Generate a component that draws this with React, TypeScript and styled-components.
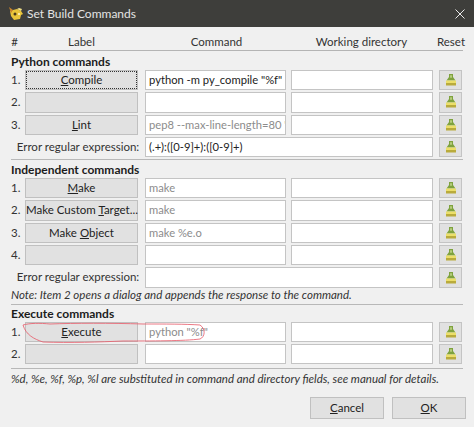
import React from 'react'
import styled, { createGlobalStyle } from 'styled-components'

const Global = createGlobalStyle`
  html, body { margin: 0; padding: 0; background: #f0f0f0; }
  body { font-family: Lato, "Noto Sans", sans-serif; font-size: 11.5px; color: #222; }
`

const Dialog = styled.div`
  position: relative;
  width: 474px;
  height: 427px;
  overflow: hidden;
  background: #f0f0f0;
`

const TitleBar = styled.div`
  height: 27px;
  background: #3e3e3b;
  color: #e4e4e4;
  display: flex;
  align-items: center;
  padding: 0 9px 0 8px;
  font-size: 12px;
`

const Title = styled.span`
  margin-left: 3px;
  flex: 1;
`

const Body = styled.div`
  padding: 7px 11px 0;
`

const HeaderRow = styled.div`
  display: flex;
  height: 16px;
  line-height: 16px;
  border-bottom: 1px solid #b4b4b4;
  color: #333;
`

const HeaderCell = styled.div<{ $w: number }>`
  width: ${p => p.$w}px;
  text-align: center;
  flex: none;
`

const SectionTitle = styled.div<{ $top: number }>`
  font-size: 12px;
  font-weight: bold;
  color: #1c1c1c;
  height: 15px;
  line-height: 14px;
  margin-top: ${p => p.$top}px;
`

const Rows = styled.div`
  display: flex;
  flex-direction: column;
  gap: 2px;
`

const Row = styled.div`
  display: flex;
  height: 20.3px;
  align-items: stretch;
`

const Num = styled.div`
  width: 14px;
  flex: none;
  line-height: 20px;
  color: #333;
`

const LabelButton = styled.div<{ $focus?: boolean }>`
  width: 113px;
  flex: none;
  margin-right: 7px;
  box-sizing: border-box;
  background: #e1e1e1;
  border: 1px solid #c0c0c0;
  text-align: center;
  line-height: 18px;
  color: #222;
  white-space: nowrap;
  outline: ${p => (p.$focus ? '1px dotted #333' : 'none')};
  outline-offset: -2px;
`

const ErrorLabel = styled.div`
  width: 134px;
  flex: none;
  text-align: center;
  line-height: 20px;
  color: #333;
  white-space: nowrap;
`

const Field = styled.div<{ $w: number; $gap: number; $hint?: boolean }>`
  width: ${p => p.$w}px;
  flex: none;
  margin-right: ${p => p.$gap}px;
  box-sizing: border-box;
  background: #fff;
  border: 1px solid #c4c4c4;
  padding: 0 3px;
  font-size: 11.2px;
  line-height: 18px;
  white-space: nowrap;
  overflow: hidden;
  color: ${p => (p.$hint ? '#8c8c8c' : '#222')};
`

const ResetButton = styled.div`
  width: 23px;
  flex: none;
  box-sizing: border-box;
  background: #e1e1e1;
  border: 1px solid #c4c4c4;
  display: flex;
  align-items: center;
  justify-content: center;
`

const Separator = styled.div<{ $top: number }>`
  border-top: 1px solid #b8b8b8;
  margin-top: ${p => p.$top}px;
`

const Note = styled.div<{ $top: number }>`
  font-style: italic;
  line-height: 14px;
  margin-top: ${p => p.$top}px;
  color: #333;
  white-space: nowrap;
`

const Footer = styled.div`
  display: flex;
  justify-content: flex-end;
  gap: 8px;
  margin: 10.5px -3px 0 0;
`

const FooterButton = styled.div`
  width: 74px;
  height: 22px;
  box-sizing: border-box;
  background: #e1e1e1;
  border: 1px solid #c0c0c0;
  text-align: center;
  line-height: 20px;
  color: #222;
`

const Scribble = styled.svg`
  position: absolute;
  left: 0;
  top: 0;
  pointer-events: none;
`

const ClearIcon = () => (
  <svg width="12" height="14" viewBox="0 0 12 14">
    <path d="M4 1h4v3l2.5 3.5h-9L4 4z" fill="#7ea23e" />
    <path d="M5.2 2.2h1.6v2.6H5.2z" fill="#c5d88c" />
    <rect x="1" y="7.5" width="10" height="2.5" fill="#ecdf6a" />
    <rect x="1" y="10" width="10" height="2.5" fill="#b9ab3c" />
  </svg>
)

const AppIcon = () => (
  <svg width="16" height="16" viewBox="0 0 16 16">
    <path d="M2 5l3-1 4-1 4 2 2 3-2 1-1 4-6 1-3-4z" fill="#e9c53a" />
    <path d="M1 1l4 3-2 3z" fill="#c9832a" />
    <path d="M9 3l4 2 1-2-3-1z" fill="#f3e38a" />
    <circle cx="7" cy="8" r="1.5" fill="#4a3a1a" />
    <circle cx="11" cy="8" r="1.1" fill="#fff3c0" />
  </svg>
)

const CloseIcon = () => (
  <svg width="10" height="10" viewBox="0 0 10 10">
    <path d="M0.5 0.5l9 9M9.5 0.5l-9 9" stroke="#e8e8e8" strokeWidth="1" />
  </svg>
)

const Mn = styled.span`
  text-decoration: underline;
`

type CommandRow = { n: string; label?: React.ReactNode; cmd?: string; hint?: boolean; focus?: boolean }

const python: CommandRow[] = [
  { n: '1.', label: <><Mn>C</Mn>ompile</>, cmd: 'python -m py_compile "%f"', focus: true },
  { n: '2.' },
  { n: '3.', label: <><Mn>L</Mn>int</>, cmd: 'pep8 --max-line-length=80 "%f"', hint: true },
]

const independent: CommandRow[] = [
  { n: '1.', label: <><Mn>M</Mn>ake</>, cmd: 'make', hint: true },
  { n: '2.', label: <>Make Custom <Mn>T</Mn>arget...</>, cmd: 'make', hint: true },
  { n: '3.', label: <>Make <Mn>O</Mn>bject</>, cmd: 'make %e.o', hint: true },
  { n: '4.' },
]

const execute: CommandRow[] = [
  { n: '1.', label: <><Mn>E</Mn>xecute</>, cmd: 'python "%f"', hint: true },
  { n: '2.' },
]

const CommandRows = ({ rows }: { rows: CommandRow[] }) => (
  <>
    {rows.map(r => (
      <Row key={r.n}>
        <Num>{r.n}</Num>
        <LabelButton $focus={r.focus}>{r.label}</LabelButton>
        <Field $w={141} $gap={5} $hint={r.hint}>{r.cmd}</Field>
        <Field $w={142} $gap={6} />
        <ResetButton><ClearIcon /></ResetButton>
      </Row>
    ))}
  </>
)

const ErrorRow = ({ value }: { value?: string }) => (
  <Row>
    <ErrorLabel>Error regular expression:</ErrorLabel>
    <Field $w={288} $gap={6}>{value}</Field>
    <ResetButton><ClearIcon /></ResetButton>
  </Row>
)

export default function App() {
  return (
    <Dialog>
      <Global />
      <TitleBar>
        <AppIcon />
        <Title>Set Build Commands</Title>
        <CloseIcon />
      </TitleBar>
      <Body>
        <HeaderRow>
          <HeaderCell $w={7}>#</HeaderCell>
          <HeaderCell $w={127}>Label</HeaderCell>
          <HeaderCell $w={143}>Command</HeaderCell>
          <HeaderCell $w={147}>Working directory</HeaderCell>
          <HeaderCell $w={32}>Reset</HeaderCell>
        </HeaderRow>
        <SectionTitle $top={4}>Python commands</SectionTitle>
        <Rows>
          <CommandRows rows={python} />
          <ErrorRow value="(.+):([0-9]+):([0-9]+)" />
        </Rows>
        <Separator $top={2} />
        <SectionTitle $top={3}>Independent commands</SectionTitle>
        <Rows>
          <CommandRows rows={independent} />
          <ErrorRow />
        </Rows>
        <Note $top={0}>Note: Item 2 opens a dialog and appends the response to the command.</Note>
        <Separator $top={2} />
        <SectionTitle $top={2}>Execute commands</SectionTitle>
        <Rows>
          <CommandRows rows={execute} />
        </Rows>
        <Separator $top={4} />
        <Note $top={3}>%d, %e, %f, %p, %l are substituted in command and directory fields, see manual for details.</Note>
        <Footer>
          <FooterButton><Mn>C</Mn>ancel</FooterButton>
          <FooterButton><Mn>O</Mn>K</FooterButton>
        </Footer>
      </Body>
      <Scribble width="474" height="427" viewBox="0 0 474 427">
        <path
          d="M23 325C26 335 34 339 43 342C70 343 100 342 123 341C150 341 185 341 200 339C205 337 206 329 200 325C185 324 165 324 143 324C110 323 75 323 50 324C40 323 30 323 23 325Z"
          fill="none"
          stroke="#e8606e"
          strokeWidth="1"
          opacity="0.85"
        />
      </Scribble>
    </Dialog>
  )
}
